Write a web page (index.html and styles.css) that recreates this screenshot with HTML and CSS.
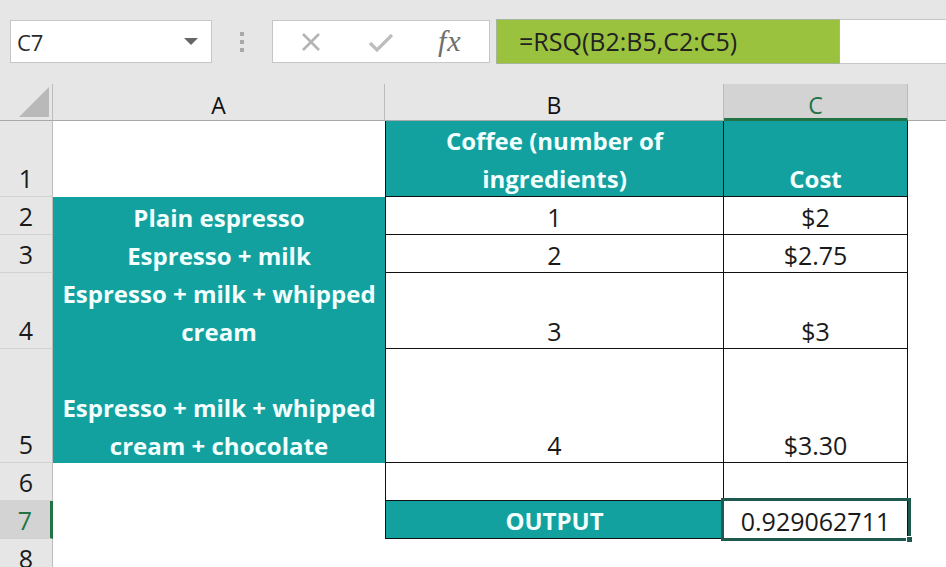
FILE: index.html
```html
<!DOCTYPE html>
<html>
<head>
<meta charset="utf-8">
<link rel="stylesheet" href="styles.css">
</head>
<body>
<div class="toolbar">
  <div class="namebox">
    <span class="nb-text">C7</span>
    <span class="nb-arrow"></span>
  </div>
  <div class="dots"><i></i><i></i><i></i></div>
  <div class="fxbox">
    <svg class="ico-x" width="22" height="22" viewBox="0 0 22 22"><path d="M3 3 L19 19 M19 3 L3 19" stroke="#b4b4b4" stroke-width="2.6" fill="none"/></svg>
    <svg class="ico-check" width="26" height="22" viewBox="0 0 26 22"><path d="M2 12 L9 19 L24 4" stroke="#bdbdbd" stroke-width="3.2" fill="none"/></svg>
    <span class="ico-fx">fx</span>
  </div>
  <div class="formula">
    <div class="formula-hl">=RSQ(B2:B5,C2:C5)</div>
  </div>
</div>

<div class="sheet">
  <div class="corner"><span class="corner-tri"></span></div>
  <div class="colhead">A</div>
  <div class="colhead">B</div>
  <div class="colhead sel">C</div>
  <div class="colhead last"></div>

  <div class="rowhead">1</div>
  <div class="cell"></div>
  <div class="cell b teal"><span>Coffee (number of<br>ingredients)</span></div>
  <div class="cell c teal"><span>Cost</span></div>
  <div class="cell"></div>

  <div class="rowhead">2</div>
  <div class="cell teal"><span>Plain espresso</span></div>
  <div class="cell b"><span>1</span></div>
  <div class="cell c"><span>$2</span></div>
  <div class="cell"></div>

  <div class="rowhead">3</div>
  <div class="cell teal"><span>Espresso + milk</span></div>
  <div class="cell b"><span>2</span></div>
  <div class="cell c"><span>$2.75</span></div>
  <div class="cell"></div>

  <div class="rowhead">4</div>
  <div class="cell teal"><span>Espresso + milk + whipped<br>cream</span></div>
  <div class="cell b"><span>3</span></div>
  <div class="cell c"><span>$3</span></div>
  <div class="cell"></div>

  <div class="rowhead">5</div>
  <div class="cell teal"><span>Espresso + milk + whipped<br>cream + chocolate</span></div>
  <div class="cell b"><span>4</span></div>
  <div class="cell c"><span>$3.30</span></div>
  <div class="cell"></div>

  <div class="rowhead">6</div>
  <div class="cell"></div>
  <div class="cell b"></div>
  <div class="cell c"></div>
  <div class="cell"></div>

  <div class="rowhead sel">7</div>
  <div class="cell"></div>
  <div class="cell b teal"><span>OUTPUT</span></div>
  <div class="cell c active"><span>0.929062711</span><i class="selbox"><i class="handle"></i></i></div>
  <div class="cell"></div>

  <div class="rowhead">8</div>
  <div class="cell"></div>
  <div class="cell"></div>
  <div class="cell"></div>
  <div class="cell"></div>
</div>
</body>
</html>
```

FILE: styles.css
```css
* { box-sizing: border-box; }
html, body { margin: 0; padding: 0; }
body {
  width: 946px;
  height: 567px;
  overflow: hidden;
  background: #ffffff;
  font-family: "Open Sans", "Liberation Sans", sans-serif;
  color: #1a1a1a;
}

.toolbar {
  height: 84px;
  background: #e6e6e6;
  display: flex;
  align-items: flex-start;
  padding-top: 20px;
}
.namebox {
  margin-left: 10px;
  width: 202px;
  height: 43px;
  background: #fff;
  border: 1px solid #c6c6c6;
  display: flex;
  align-items: center;
  justify-content: space-between;
  padding: 0 13px 0 6px;
}
.nb-text { font-size: 22px; color: #2a2a2a; }
.nb-arrow {
  width: 0; height: 0;
  border-left: 7px solid transparent;
  border-right: 7px solid transparent;
  border-top: 7px solid #666;
}
.dots {
  width: 60px;
  height: 43px;
  display: flex;
  flex-direction: column;
  align-items: center;
  justify-content: center;
  gap: 4px;
}
.dots i { display: block; width: 4px; height: 4px; background: #a8a8a8; }
.fxbox {
  width: 218px;
  height: 43px;
  background: #fff;
  border: 1px solid #c6c6c6;
  display: flex;
  align-items: center;
  padding-left: 27px;
}
.ico-x { margin-right: 46px; }
.ico-check { margin-right: 44px; }
.ico-fx {
  font-family: "Liberation Serif", serif;
  font-style: italic;
  font-size: 30px;
  color: #6e6e6e;
  letter-spacing: 1px;
  margin-top: -2px;
}
.formula {
  flex: 1;
  margin-left: 6px;
  margin-top: -1px;
  height: 45px;
  background: #fff;
  border-top: 1px solid #c6c6c6;
  border-bottom: 1px solid #c6c6c6;
}
.formula-hl {
  width: 344px;
  height: 45px;
  margin-top: -1px;
  background: #9bc23f;
  border: 1px solid #a7b59a;
  font-size: 25px;
  color: #222;
  line-height: 42px;
  padding-left: 22px;
}

.sheet {
  display: grid;
  grid-template-columns: 53px 332px 339px 184px 1fr;
  grid-template-rows: 37px 76px 38px 38px 76px 114px 38px 38px 38px;
}
.corner {
  background: #e6e6e6;
  border-right: 1px solid #bcbcbc;
  border-bottom: 1px solid #a9a9a9;
  position: relative;
}
.corner-tri {
  position: absolute;
  right: 3px;
  bottom: 3px;
  width: 0; height: 0;
  border-left: 30px solid transparent;
  border-bottom: 30px solid #b9b9b9;
}
.colhead {
  background: #e6e6e6;
  border-right: 1px solid #bcbcbc;
  border-bottom: 1px solid #a9a9a9;
  font-size: 23px;
  color: #111;
  display: flex;
  align-items: center;
  justify-content: center;
  padding-top: 5px;
}
.colhead.sel {
  background: #d3d3d3;
  color: #217346;
  border-bottom: 3px solid #217346;
  padding-top: 7px;
}
.colhead.last { border-right: none; }
.rowhead {
  background: #e6e6e6;
  border-right: 1px solid #bcbcbc;
  border-bottom: 1px solid #d2d2d2;
  font-size: 25px;
  color: #1a1a1a;
  display: flex;
  align-items: flex-end;
  justify-content: center;
  line-height: 36px;
}
.rowhead.sel {
  background: #d3d3d3;
  color: #217346;
  border-right: 3px solid #217346;
}
.cell {
  font-size: 25px;
  line-height: 38px;
  display: flex;
  align-items: flex-end;
  justify-content: center;
  text-align: center;
  white-space: nowrap;
}
.cell > span { margin-bottom: -2px; }
.cell.b { border-left: 1px solid #111; border-right: 1px solid #111; border-bottom: 1px solid #111; }
.cell.c { border-right: 1px solid #111; border-bottom: 1px solid #111; }
.teal {
  background: #12a19f;
  color: #f2fffe;
  font-weight: 700;
  font-size: 24px;
}
.cell.teal { border-bottom-color: #12a19f; }
.cell.b.teal { border-bottom-color: #111; }
.cell.c.teal { border-bottom-color: #111; }
.active { position: relative; }
.selbox {
  position: absolute;
  left: -3px; top: -3px; right: -4px; bottom: -3px;
  border: 3px solid #1f5a4e;
}
.handle {
  position: absolute;
  right: -5px;
  bottom: -5px;
  width: 7px; height: 7px;
  background: #1f5a4e;
  border: 1px solid #fff;
}
```
